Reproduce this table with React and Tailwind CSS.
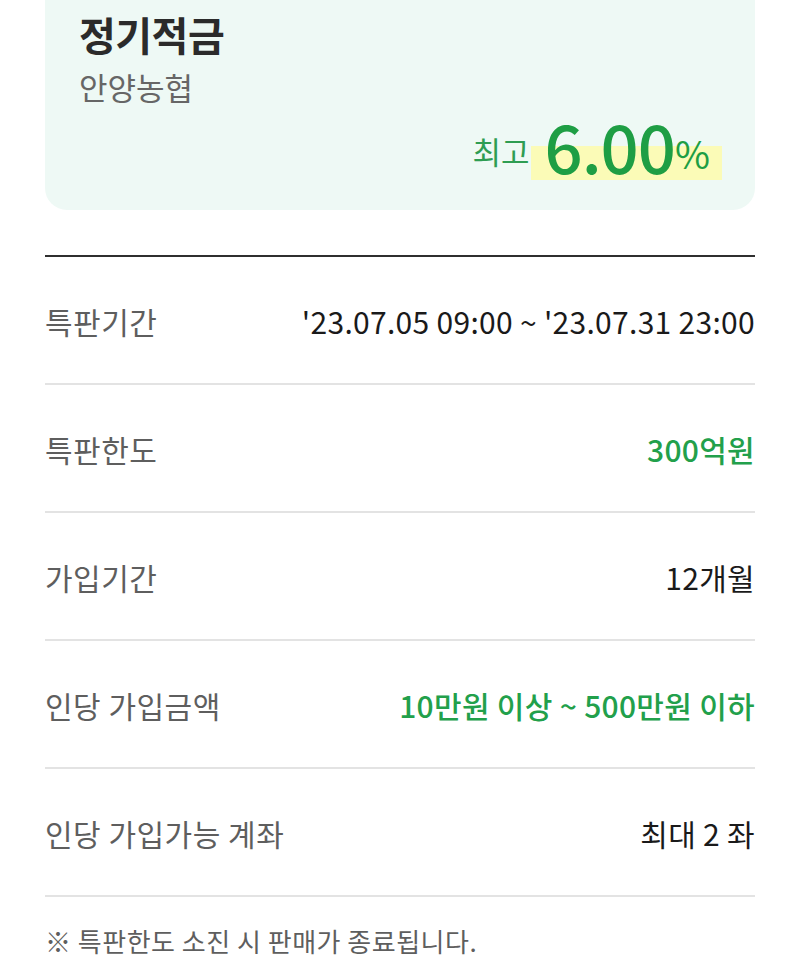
import React from 'react';

const rows = [
	{ label: '특판기간', value: "'23.07.05 09:00 ~ '23.07.31 23:00", green: false },
	{ label: '특판한도', value: '300억원', green: true },
	{ label: '가입기간', value: '12개월', green: false },
	{ label: '인당 가입금액', value: '10만원 이상 ~ 500만원 이하', green: true },
	{ label: '인당 가입가능 계좌', value: '최대 2 좌', green: false },
];

export default function App() {
	return (
		<div className="min-h-[978px] bg-white px-[45px] font-['Noto_Sans_CJK_KR','Noto_Sans',sans-serif]">
			{/* 상품 카드 */}
			<div className="h-[210px] rounded-b-[22px] bg-[#eef9f5] pl-[34px] pr-[33px] pt-[8px]">
				<h1 className="text-[40px] font-bold leading-[52px] text-[#2b2b2b] tracking-[-0.5px]">정기적금</h1>
				<p className="mt-[7px] text-[31px] leading-[40px] text-[#666666]">안양농협</p>
				<div className="mt-[4px] flex items-end justify-end">
					<span className="mb-[12px] mr-[2px] text-[31px] leading-none text-[#2e9d52]">최고</span>
					<span className="relative inline-flex items-end pl-[13px] pr-[12px]">
						<span className="absolute bottom-[-2px] left-0 right-0 h-[34px] bg-[#fbfbb7]" />
						<span className="relative text-[67px] font-medium leading-none text-[#1e9e44] tracking-[-1px]">6.00</span>
						<span className="relative mb-[6px] text-[38px] leading-none text-[#1e9e44]">%</span>
					</span>
				</div>
			</div>

			<div className="mt-[45px] h-[2px] bg-[#2f2f2f]" />

			{rows.map((r) => (
				<div key={r.label} className="flex h-[128px] items-center justify-between border-b-2 border-[#e3e3e3] pt-[2px]">
					<span className="text-[30px] text-[#5e5e5e] tracking-[0.5px]">{r.label}</span>
					<span className={`text-[30px] tracking-[0.3px] ${r.green ? 'font-medium text-[#22a04b]' : 'text-[#1a1a1a]'}`}>{r.value}</span>
				</div>
			))}

			<p className="pt-[24px] text-[26px] text-[#5e5e5e] tracking-[0.5px]">※ 특판한도 소진 시 판매가 종료됩니다.</p>
		</div>
	);
}
